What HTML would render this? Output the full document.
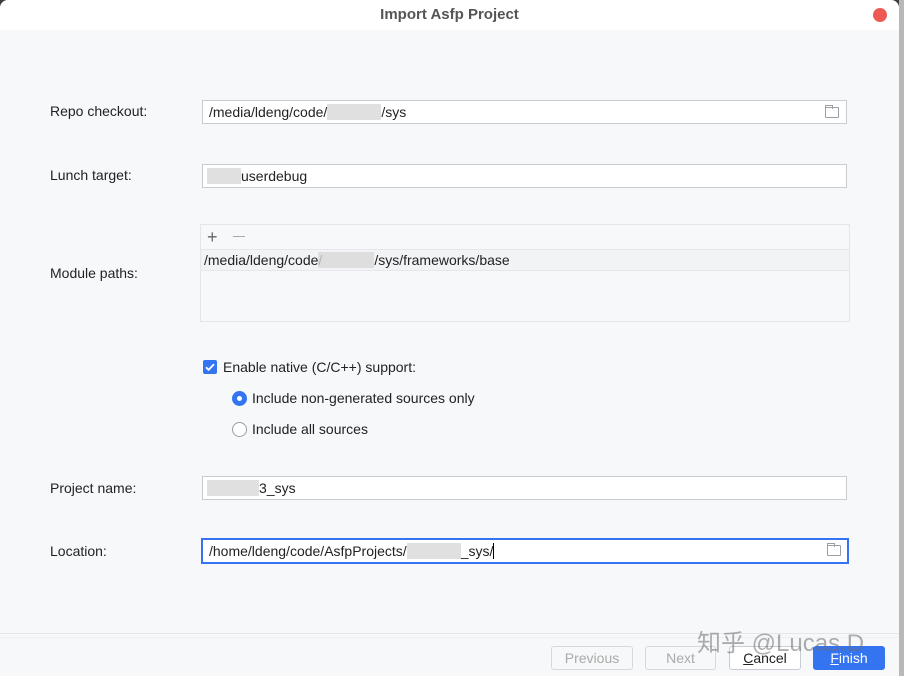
<!DOCTYPE html>
<html><head><meta charset="utf-8">
<style>
*{margin:0;padding:0;box-sizing:border-box}
body{width:904px;height:676px;overflow:hidden;background:#3c3f41;font-family:"Liberation Sans","Noto Sans CJK SC",sans-serif;font-size:14px;color:#222;position:relative}
.dlg{position:absolute;left:0;top:0;width:899px;height:676px;background:#f7f8fa;border-radius:8px 8px 0 0;overflow:hidden}
.title{position:absolute;left:0;top:0;width:899px;height:30px;background:#fff;text-align:center;line-height:29px;font-weight:bold;font-size:15px;color:#555}
.close{position:absolute;left:873px;top:8px;width:14px;height:14px;border-radius:50%;background:#ec5a52}
.lbl{position:absolute;left:50px;font-size:14px;color:#222}
.inp{position:absolute;background:#fff;border:1px solid #c9ccd1;height:24px;line-height:22px;padding-left:6px;font-size:14px;color:#222}
.blur{display:inline-block;background:#d8d8d8;height:16px;vertical-align:-3px;opacity:.8}
.fold{position:absolute;right:7px;top:6px;width:14px;height:11px;border:1px solid #9aa0a6;border-radius:1px}
.fold:before{content:"";position:absolute;left:-1px;top:-3px;width:6px;height:3px;border:1px solid #9aa0a6;border-bottom:none}
.btn{position:absolute;top:646px;height:24px;border:1px solid #d5d8dc;border-radius:3px;text-align:center;line-height:22px;font-size:14px;color:#aaa;background:#f7f8fa}
.right{position:absolute;left:899px;top:0;width:5px;height:676px;background:#b8b8b8}
</style></head><body>
<div class="right"></div>
<div class="dlg">
<div class="title">Import Asfp Project</div>
<div class="close"></div>

<div class="lbl" style="top:103px">Repo checkout:</div>
<div class="inp" style="left:202px;top:100px;width:645px">/media/ldeng/code/<span class="blur" style="width:54px"></span>/sys<div class="fold"></div></div>

<div class="lbl" style="top:167px">Lunch target:</div>
<div class="inp" style="left:202px;top:164px;width:645px"><span class="blur" style="width:34px;margin-left:-2px"></span>userdebug</div>

<div class="lbl" style="top:265px">Module paths:</div>
<div style="position:absolute;left:200px;top:224px;width:650px;height:98px;border:1px solid #e3e5e8;background:#f7f8fa">
 <div style="position:absolute;left:6px;top:2px;font-size:18px;color:#666;line-height:20px">+</div>
 <div style="position:absolute;left:32px;top:11px;width:12px;height:1px;background:#aaa"></div>
 <div style="position:absolute;left:0;top:24px;width:648px;height:22px;background:#f2f3f5;border-top:1px solid #e6e7ea;border-bottom:1px solid #e6e7ea;line-height:20px;padding-left:3px">/media/ldeng/code/<span class="blur" style="width:56px;margin-left:-4px"></span>/sys/frameworks/base</div>
</div>

<div style="position:absolute;left:203px;top:360px;width:14px;height:14px;background:#3574f0;border-radius:2px"><svg width="14" height="14"><path d="M3 7.2l2.6 2.6L11 4.3" stroke="#fff" stroke-width="1.8" fill="none"/></svg></div>
<div class="lbl" style="left:223px;top:359px">Enable native (C/C++) support:</div>
<div style="position:absolute;left:232px;top:391px;width:15px;height:15px;border-radius:50%;background:#3574f0"><div style="position:absolute;left:5px;top:5px;width:5px;height:5px;border-radius:50%;background:#fff"></div></div>
<div class="lbl" style="left:252px;top:390px">Include non-generated sources only</div>
<div style="position:absolute;left:232px;top:422px;width:15px;height:15px;border-radius:50%;border:1px solid #9a9da2;background:#fff"></div>
<div class="lbl" style="left:252px;top:421px">Include all sources</div>

<div class="lbl" style="top:480px">Project name:</div>
<div class="inp" style="left:202px;top:476px;width:645px"><span class="blur" style="width:52px;margin-left:-2px"></span>3_sys</div>

<div class="lbl" style="top:543px">Location:</div>
<div class="inp" style="left:201px;top:538px;width:648px;height:26px;border:2px solid #3574f0;line-height:22px;padding-left:6px">/home/ldeng/code/AsfpProjects/<span class="blur" style="width:54px"></span>_sys/<span style="display:inline-block;width:1px;height:16px;background:#000;vertical-align:-3px"></span><div class="fold" style="right:6px;top:5px"></div></div>

<div style="position:absolute;left:0;top:633px;width:899px;height:1px;background:#e4e6ea"></div>
<div style="position:absolute;left:0;top:637px;width:899px;height:1px;background:#eff0f2"></div>

<div class="btn" style="left:551px;width:82px">Previous</div>
<div class="btn" style="left:645px;width:71px">Next</div>
<div class="btn" style="left:729px;width:72px;background:#fff;border-color:#c9ccd1;color:#222"><u>C</u>ancel</div>
<div class="btn" style="left:813px;width:72px;background:#3574f0;border-color:#3574f0;color:#fff"><u>F</u>inish</div>
<div style="position:absolute;left:697px;top:623px;font-size:24px;color:rgba(110,110,110,.55)">知乎 @Lucas.D</div>
</div>
</body></html>
